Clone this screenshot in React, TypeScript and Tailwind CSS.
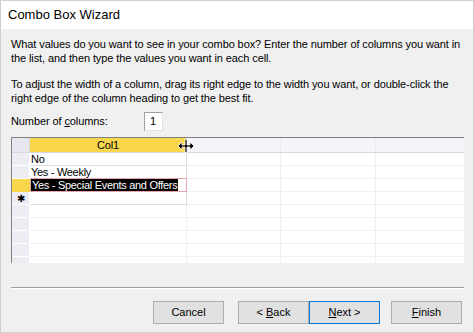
import React from "react";

const rows = ["No", "Yes - Weekly", "Yes - Special Events and Offers", "", "", "", "", "", ""];

const ResizeCursor = () => (
  <svg width="18" height="14" viewBox="0 0 18 14" className="absolute left-[147px] top-[1px]">
    <path
      d="M1 7 L5 3 L5 6 L8 6 L8 0.5 L10 0.5 L10 6 L13 6 L13 3 L17 7 L13 11 L13 8 L10 8 L10 13.5 L8 13.5 L8 8 L5 8 L5 11 Z"
      fill="#000"
      stroke="#fff"
      strokeWidth="0.8"
    />
  </svg>
);

const Btn = ({ children, focused }: { children: React.ReactNode; focused?: boolean }) => (
  <div
    className={`w-[71px] h-[23px] flex items-center justify-center bg-[#e1e1e1] border ${
      focused ? "border-[#0078d7]" : "border-[#adadad]"
    }`}
  >
    {children}
  </div>
);

export default function App() {
  return (
    <div className="w-[474px] h-[333px] bg-[#f0f0f0] flex flex-col border border-[#cfcfcf] text-black font-['Liberation_Sans',Arial,sans-serif] text-[11px] overflow-hidden">
      {/* Title */}
      <div className="h-[28px] bg-white flex items-center pl-[7px] text-[13px] shrink-0">
        Combo Box Wizard
      </div>

      <div className="px-[10px] pt-[8px] flex flex-col tracking-[-0.1px]">
        <p className="leading-[14px] whitespace-nowrap">
          What values do you want to see in your combo box? Enter the number of columns you want in
          <br />
          the list, and then type the values you want in each cell.
        </p>
        <p className="leading-[14px] mt-[12px] whitespace-nowrap">
          To adjust the width of a column, drag its right edge to the width you want, or double-click the
          <br />
          right edge of the column heading to get the best fit.
        </p>

        {/* Number of columns */}
        <div className="flex items-center mt-[6px] h-[20px]">
          <span className="w-[133px]">
            Number of <span className="underline">c</span>olumns:
          </span>
          <div className="w-[19px] h-[19px] bg-white border border-[#a0a0a0] border-r-[#e3e3e3] border-b-[#e3e3e3] pl-[5px] leading-[17px]">
            1
          </div>
        </div>

        {/* Grid */}
        <div className="mt-[6px] w-[453px] h-[126px] bg-white border-t border-l border-[#828282] overflow-hidden relative whitespace-nowrap">
          {/* header */}
          <div className="flex h-[15px] border-b border-[#d8d8e4]">
            <div className="w-[18px] bg-[#e6e6ee] border-r border-[#d8d8e4]" />
            <div className="w-[157px] bg-[#f8d74c] flex items-center justify-center border-r border-[#e8d8dc] relative">
              Col1
              <ResizeCursor />
            </div>
            <div className="flex-1 bg-[#f4f4fb] flex">
              <div className="w-[94px] border-r border-[#eaeaf2]" />
              <div className="w-[95px] border-r border-[#eaeaf2]" />
            </div>
          </div>
          {rows.map((r, i) => {
            const selected = i === 2;
            const isNew = i === 3;
            const active = i < 4;
            return (
              <div key={i} className="flex h-[13px]">
                <div
                  className={`w-[18px] border-b border-r flex items-center justify-center text-[10px] ${
                    selected ? "bg-[#f8d74c] border-[#f8d74c]" : "bg-[#ececf2] border-white"
                  }`}
                >
                  {isNew ? "✱" : ""}
                </div>
                <div
                  className={`w-[157px] flex items-center ${
                    selected
                      ? "border border-[#e8a4ac] -mt-px h-[14px]"
                      : active
                      ? "border-b border-r border-[#dcdce4]"
                      : "border-b border-r border-[#f0f0f4]"
                  }`}
                >
                  {r && (
                    <span
                      className={`pl-[1px] pr-[1px] leading-[12px] tracking-[-0.3px] ${
                        selected ? "bg-black text-white" : ""
                      }`}
                    >
                      {r}
                    </span>
                  )}
                </div>
                <div className="w-[94px] border-b border-r border-[#f0f0f4]" />
                <div className="w-[95px] border-b border-r border-[#f0f0f4]" />
                <div className="flex-1 border-b border-[#f0f0f4]" />
              </div>
            );
          })}
        </div>
      </div>

      {/* Separator */}
      <div className="mx-[10px] mt-[24px] w-[453px] border-t border-[#a0a0a0] border-b border-b-white" />

      {/* Buttons */}
      <div className="flex justify-end pr-[11px] mt-[12px]">
        <Btn>Cancel</Btn>
        <div className="w-[14px]" />
        <Btn>
          &lt; <span className="underline ml-[3px]">B</span>ack
        </Btn>
        <Btn focused>
          <span className="underline">N</span>ext &gt;
        </Btn>
        <div className="w-[11px]" />
        <Btn>
          <span className="underline">F</span>inish
        </Btn>
      </div>
    </div>
  );
}
